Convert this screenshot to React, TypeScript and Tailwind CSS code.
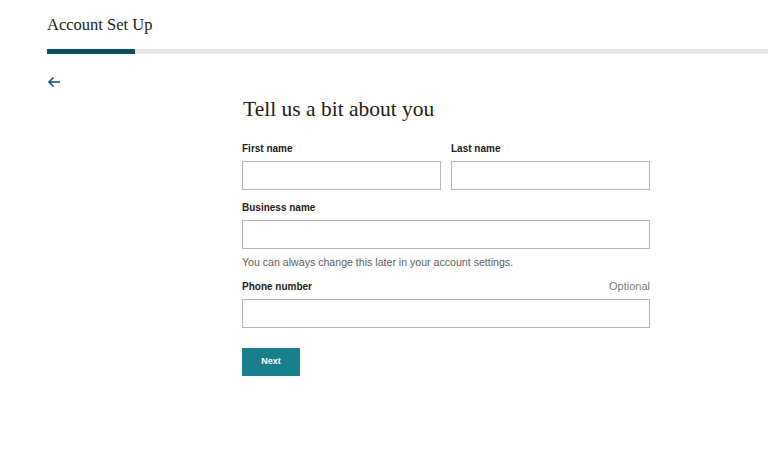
const fields = [
  { label: "First name", half: true },
  { label: "Last name", half: true },
];

function Label({ children, extra }: { children: string; extra?: string }) {
  return (
    <div className="flex items-end justify-between h-[13px] mb-[7px]">
      <span className="text-[10px] font-bold text-[#241c15] leading-none">{children}</span>
      {extra && <span className="text-[11px] text-[#7a7a7a] leading-none">{extra}</span>}
    </div>
  );
}

function Input() {
  return <div className="h-[29px] w-full border border-[#b9b6b2] bg-white" />;
}

export default function App() {
  return (
    <div className="w-[768px] h-[449px] bg-white overflow-hidden font-['Liberation_Sans',Arial,sans-serif]">
      {/* Header */}
      <div className="pl-[47px] pt-[15px]">
        <h1 className="font-['Liberation_Serif',serif] text-[16.5px] text-[#241c15] leading-[20px]">
          Account Set Up
        </h1>
      </div>
      <div className="mt-[14px] ml-[47px] flex h-[5px]">
        <div className="w-[88px] bg-[#0e4f66]" />
        <div className="flex-1 bg-[#e9e7e3]" />
      </div>

      {/* Back arrow */}
      <div className="ml-[47px] mt-[22px] h-[12px] w-[14px] text-[#0e5a70]">
        <svg viewBox="0 0 14 12" width="14" height="12" fill="none" stroke="currentColor" strokeWidth="1.6">
          <path d="M13 6H2" />
          <path d="M6.5 1.5L2 6l4.5 4.5" />
        </svg>
      </div>

      {/* Form */}
      <div className="ml-[242px] w-[408px] mt-[7px]">
        <h2 className="font-['Liberation_Serif',serif] text-[21.5px] text-[#241c15] leading-[28px] pl-px">
          Tell us a bit about you
        </h2>

        <div className="mt-[18px] grid grid-cols-2 gap-x-[10px]">
          {fields.map((f) => (
            <div key={f.label}>
              <Label>{f.label}</Label>
              <Input />
            </div>
          ))}
        </div>

        <div className="mt-[10px]">
          <Label>Business name</Label>
          <Input />
          <p className="mt-[7px] text-[10.6px] text-[#5e5e5e] leading-[13px]">
            You can always change this later in your account settings.
          </p>
        </div>

        <div className="mt-[10px]">
          <Label extra="Optional">Phone number</Label>
          <Input />
        </div>

        <button className="mt-[20px] w-[58px] h-[28px] bg-[#1a7f8c] text-white text-[9px] font-bold">
          Next
        </button>
      </div>
    </div>
  );
}
